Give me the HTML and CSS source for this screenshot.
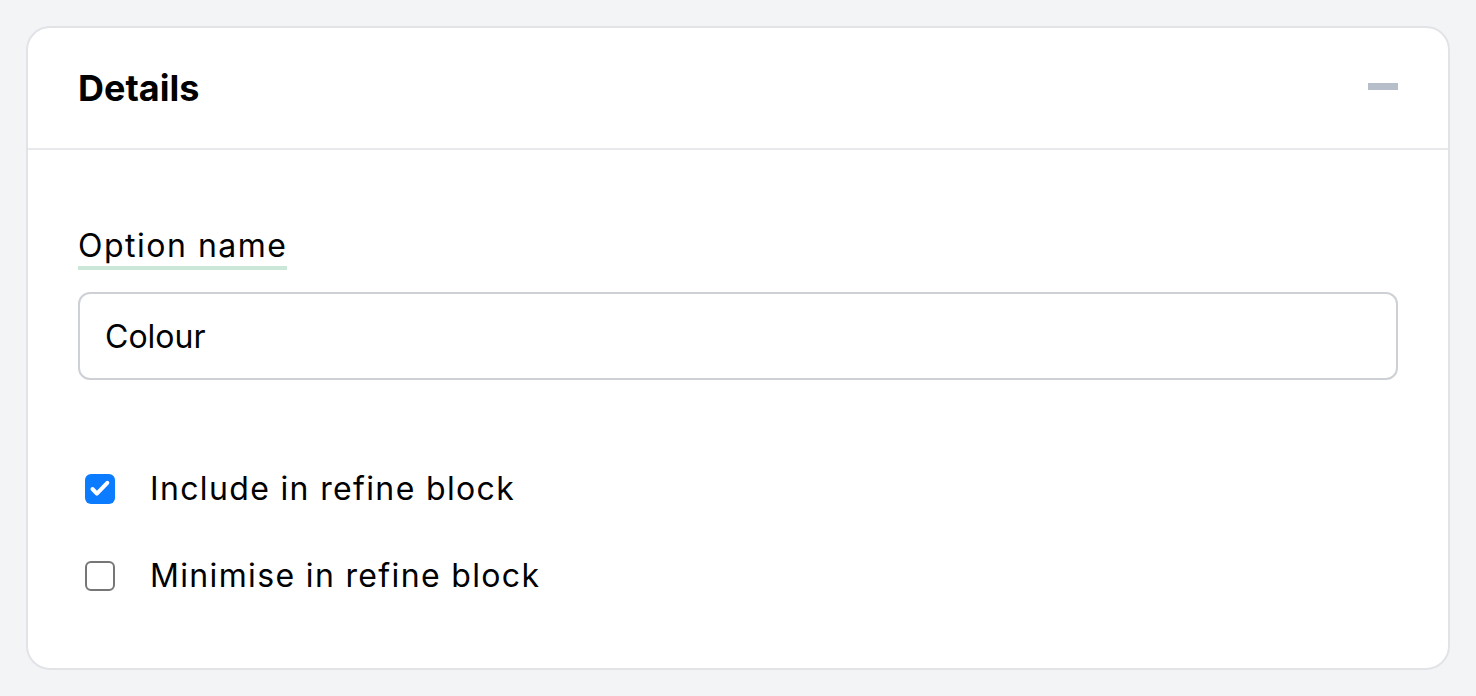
FILE: index.html
```html
<!DOCTYPE html>
<html lang="en">
<head>
<meta charset="utf-8">
<title>Details</title>
<link rel="stylesheet" href="styles.css">
</head>
<body>
<section class="card">
  <header class="card-header">
    <h2 class="card-title">Details</h2>
    <button class="collapse-btn" aria-label="Collapse"><span class="minus"></span></button>
  </header>
  <div class="card-body">
    <label class="field-label" for="option-name">Option name</label>
    <input class="text-input" id="option-name" type="text" value="Colour">
    <div class="checks">
      <label class="check">
        <span class="box checked">
          <svg viewBox="0 0 30 30" width="30" height="30"><path d="M7.5 15l4.4 4.6L22.3 8.8" fill="none" stroke="#fff" stroke-width="4" stroke-linecap="round" stroke-linejoin="round"/></svg>
        </span>
        <span class="check-text">Include in refine block</span>
      </label>
      <label class="check">
        <span class="box"></span>
        <span class="check-text">Minimise in refine block</span>
      </label>
    </div>
  </div>
</section>
</body>
</html>
```

FILE: styles.css
```css
html, body {
  margin: 0;
  padding: 0;
}

body {
  background: #f3f4f6;
  font-family: Inter, "Noto Sans", sans-serif;
  color: #000;
  padding: 26px 26px 0 26px;
  height: 696px;
  box-sizing: border-box;
}

.card {
  background: #fff;
  border: 2px solid #e2e3e7;
  border-radius: 24px;
  box-sizing: border-box;
  height: 644px;
}

.card-header {
  display: flex;
  align-items: center;
  justify-content: space-between;
  height: 120px;
  padding: 0 50px 0 50px;
  border-bottom: 2px solid #e8e9ec;
}

.card-title {
  margin: 0;
  font-size: 36px;
  font-weight: 700;
  letter-spacing: 0;
}

.collapse-btn {
  background: none;
  border: 0;
  padding: 0;
  width: 30px;
  height: 30px;
  display: flex;
  align-items: center;
  cursor: pointer;
  margin-top: -3px;
}

.minus {
  display: block;
  width: 30px;
  height: 7px;
  background: #b6bec9;
}

.card-body {
  padding: 76px 50px 0 50px;
}

.field-label {
  display: inline-block;
  font-size: 32px;
  line-height: 40px;
  letter-spacing: 1.5px;
  border-bottom: 4px solid #cbe7d8;
}

.text-input {
  display: block;
  box-sizing: border-box;
  width: 100%;
  height: 88px;
  margin-top: 22px;
  border: 2px solid #cdd1d6;
  border-radius: 12px;
  padding: 0 25px;
  font-family: inherit;
  font-size: 32px;
  color: #000;
  outline: none;
}

.checks {
  display: flex;
  flex-direction: column;
  gap: 47px;
  margin-top: 89px;
}

.check {
  display: flex;
  align-items: center;
  gap: 35px;
  font-size: 32px;
  line-height: 40px;
  letter-spacing: 1.35px;
  padding-left: 7px;
}

.box {
  width: 30px;
  height: 30px;
  box-sizing: border-box;
  border: 2px solid #767676;
  border-radius: 6px;
  display: block;
  flex: none;
}

.box.checked {
  background: #0b7cff;
  border: 0;
}

.box svg {
  display: block;
}
```
